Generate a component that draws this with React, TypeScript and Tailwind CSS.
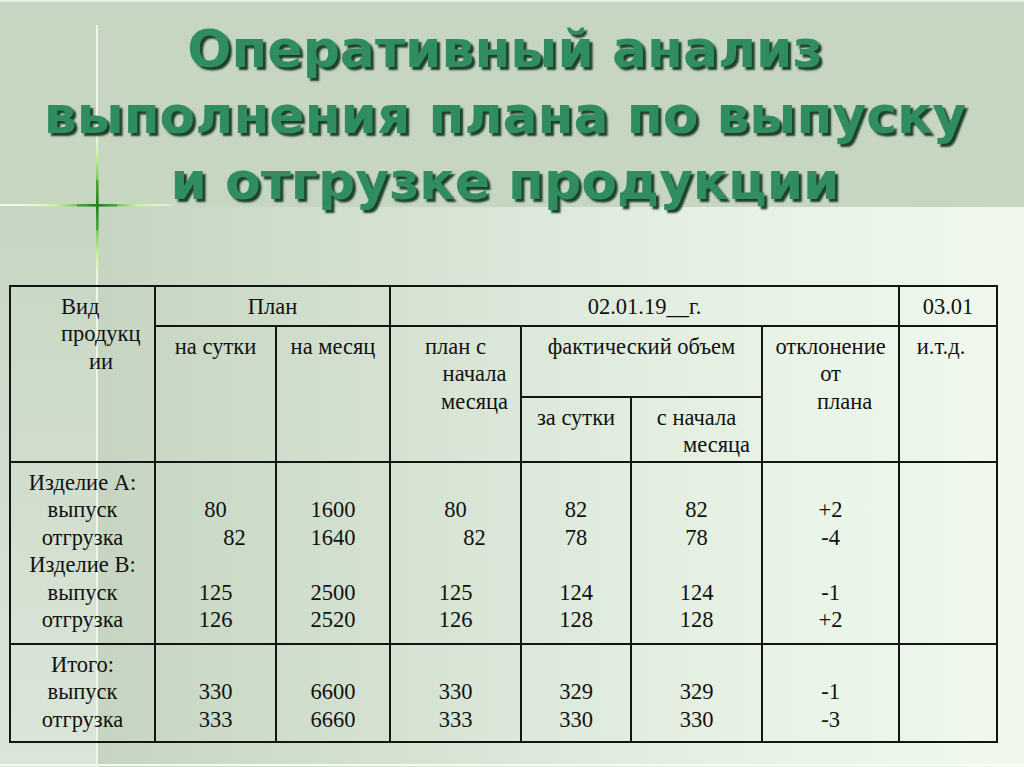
import React from "react";

type Line = { t: string; cls?: string };

const Cell = ({
  lines,
  className = "",
  colSpan,
  rowSpan,
}: {
  lines: (string | Line)[];
  className?: string;
  colSpan?: number;
  rowSpan?: number;
}) => (
  <td
    colSpan={colSpan}
    rowSpan={rowSpan}
    className={"border-2 border-[#141414] align-top p-0 pt-[6px] " + className}
  >
    {lines.map((l, i) => {
      const o = typeof l === "string" ? { t: l } : l;
      return (
        <div key={i} className={"whitespace-nowrap " + (o.cls ?? "text-center")}>
          {o.t === "" ? "\u00a0" : o.t}
        </div>
      );
    })}
  </td>
);

const SH = "pl-[38px] text-center";

export default function App() {
  return (
    <div className="relative w-[1024px] h-[767px] overflow-hidden flex flex-col bg-[linear-gradient(90deg,#c6d5c1_0px,#c6d5c1_100px,#d6e3d3_420px,#e5f0e2_700px,#f0f8ee_1000px)]">
      {/* left strip below band */}
      <div className="absolute left-0 top-[207px] w-[97px] bottom-0 bg-[linear-gradient(180deg,#c7d6c3,#dbe6d8)]" />
      {/* top band */}
      <div className="absolute left-0 top-0 right-0 h-[207px] bg-[#c6d6c1]" />
      <div className="absolute left-0 top-0 right-0 h-[2px] bg-[#e4ede1]" />
      <div className="absolute left-0 bottom-[1px] right-0 h-[2px] bg-[#f6fbf4]" />
      {/* vertical line */}
      <div className="absolute left-[96px] top-[25px] bottom-0 w-[2px] bg-[#eef6ea]" />
      {/* horizontal line */}
      <div className="absolute left-0 top-[204px] w-[180px] h-[2px] bg-[linear-gradient(90deg,#eef7e6,#eef7e6_85%,rgba(238,247,230,0))]" />
      {/* star */}
      <svg className="absolute left-[17px] top-[125px]" width="160" height="160" viewBox="0 0 160 160">
        <defs>
          <linearGradient id="gh" x1="0" x2="1" y1="0" y2="0">
            <stop offset="0" stopColor="#e8f7d8" stopOpacity="0" />
            <stop offset="0.25" stopColor="#c8ee9c" />
            <stop offset="0.42" stopColor="#5cb544" />
            <stop offset="0.5" stopColor="#0d6a14" />
            <stop offset="0.58" stopColor="#5cb544" />
            <stop offset="0.75" stopColor="#c8ee9c" />
            <stop offset="1" stopColor="#e8f7d8" stopOpacity="0" />
          </linearGradient>
          <linearGradient id="gv" x1="0" x2="0" y1="0" y2="1">
            <stop offset="0" stopColor="#e8f7d8" stopOpacity="0" />
            <stop offset="0.2" stopColor="#c8ee9c" />
            <stop offset="0.4" stopColor="#5cb544" />
            <stop offset="0.5" stopColor="#0d6a14" />
            <stop offset="0.6" stopColor="#5cb544" />
            <stop offset="0.8" stopColor="#c8ee9c" />
            <stop offset="1" stopColor="#e8f7d8" stopOpacity="0" />
          </linearGradient>
        </defs>
        <rect x="0" y="79" width="160" height="2.5" fill="url(#gh)" />
        <rect x="79" y="0" width="2.5" height="160" fill="url(#gv)" />
        <rect x="60" y="79" width="40" height="2.5" fill="#2f8f2a" opacity="0.6" />
        <rect x="79" y="55" width="2.5" height="50" fill="#2f8f2a" opacity="0.6" />
      </svg>

      {/* title */}
      <div className="relative h-[207px] pt-[16px] pr-[14px] text-center font-['DejaVu_Sans',sans-serif] font-bold text-[52px] leading-[66px] text-[#2f8d60] [text-shadow:3px_3px_2px_#1c3f2b]">
        <div>Оперативный анализ</div>
        <div>выполнения плана по выпуску</div>
        <div>и отгрузке продукции</div>
      </div>

      {/* table */}
      <table className="relative mt-[78px] ml-[9px] w-[987px] table-fixed border-collapse font-['Liberation_Serif',serif] text-[22.5px] leading-[27.4px] text-[#111]">
        <colgroup>
          <col className="w-[145px]" />
          <col className="w-[121px]" />
          <col className="w-[114px]" />
          <col className="w-[131px]" />
          <col className="w-[110px]" />
          <col className="w-[131px]" />
          <col className="w-[137px]" />
          <col className="w-[98px]" />
        </colgroup>
        <tbody>
          <tr className="h-[40px]">
            <Cell
              rowSpan={3}
              lines={[
                { t: "Вид", cls: "pl-[50px] text-left" },
                { t: "продукц", cls: "pl-[50px] text-left" },
                { t: "ии", cls: "pl-[78px] text-left" },
              ]}
            />
            <Cell colSpan={2} lines={["План"]} />
            <Cell colSpan={4} lines={["02.01.19__г."]} />
            <Cell lines={["03.01"]} />
          </tr>
          <tr className="h-[71px]">
            <Cell rowSpan={2} lines={["на сутки"]} />
            <Cell rowSpan={2} lines={["на месяц"]} />
            <Cell
              rowSpan={2}
              lines={["план с", { t: "начала", cls: SH }, { t: "месяца", cls: SH }]}
            />
            <Cell colSpan={2} lines={["фактический объем"]} />
            <Cell
              rowSpan={2}
              lines={["отклонение", "от", { t: "плана", cls: "pl-[28px] text-center" }]}
            />
            <Cell rowSpan={2} lines={[{ t: "и.т.д.", cls: "pr-[14px] text-center" }]} />
          </tr>
          <tr className="h-[65px]">
            <Cell lines={["за сутки"]} />
            <Cell lines={["с начала", { t: "месяца", cls: "pl-[40px] text-center" }]} />
          </tr>
          <tr className="h-[182px]">
            <Cell
              lines={["Изделие А:", "выпуск", "отгрузка", "Изделие В:", "выпуск", "отгрузка"]}
            />
            <Cell lines={["", "80", { t: "82", cls: SH }, "", "125", "126"]} />
            <Cell lines={["", "1600", "1640", "", "2500", "2520"]} />
            <Cell lines={["", "80", { t: "82", cls: SH }, "", "125", "126"]} />
            <Cell lines={["", "82", "78", "", "124", "128"]} />
            <Cell lines={["", "82", "78", "", "124", "128"]} />
            <Cell lines={["", "+2", "-4", "", "-1", "+2"]} />
            <Cell lines={[""]} />
          </tr>
          <tr className="h-[98px]">
            <Cell lines={["Итого:", "выпуск", "отгрузка"]} />
            <Cell lines={["", "330", "333"]} />
            <Cell lines={["", "6600", "6660"]} />
            <Cell lines={["", "330", "333"]} />
            <Cell lines={["", "329", "330"]} />
            <Cell lines={["", "329", "330"]} />
            <Cell lines={["", "-1", "-3"]} />
            <Cell lines={[""]} />
          </tr>
        </tbody>
      </table>
    </div>
  );
}
